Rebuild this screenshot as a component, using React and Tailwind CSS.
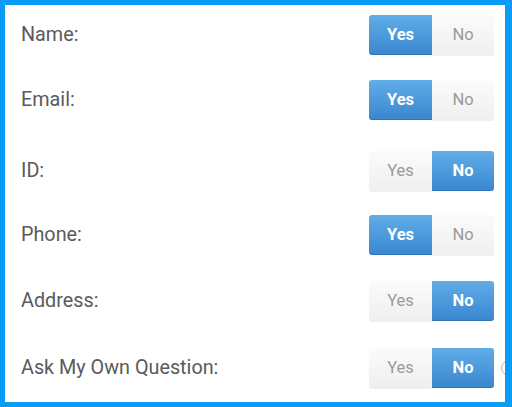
import React from "react";

const rows = [
  { label: "Name:", yes: true, mt: "mt-[10px]" },
  { label: "Email:", yes: true, mt: "mt-[25px]" },
  { label: "ID:", yes: false, mt: "mt-[31px]" },
  { label: "Phone:", yes: true, mt: "mt-[24px]" },
  { label: "Address:", yes: false, mt: "mt-[26px]" },
  { label: "Ask My Own Question:", yes: false, mt: "mt-[27px]", help: true },
];

const active =
  "bg-gradient-to-b from-[#60ade8] to-[#3a86cf] text-white font-bold shadow-[inset_0_-1px_0_rgba(0,0,0,0.12)]";
const inactive =
  "bg-gradient-to-b from-[#fbfbfb] to-[#efefef] text-[#9a9a9a] font-normal shadow-[0_1px_1px_rgba(0,0,0,0.07)]";

function Toggle({ yes, help }) {
  return (
    <div className="relative flex">
      <div
        className={`w-[63px] h-[40px] flex items-center justify-center rounded-l-[3px] text-[16.5px] ${
          yes ? active : inactive
        }`}
      >
        Yes
      </div>
      <div
        className={`w-[62px] h-[40px] flex items-center justify-center rounded-r-[3px] text-[16.5px] ${
          yes ? inactive : active
        }`}
      >
        No
      </div>
      {help && (
        <div className="absolute left-[132px] top-[12px] w-[16px] h-[16px] rounded-full border-[1.5px] border-[#b5b5b5]" />
      )}
    </div>
  );
}

export default function App() {
  return (
    <div
      className="w-[512px] h-[407px] bg-[#0a9bf6] pl-[5px] pt-[5px] pr-[7px] pb-[5px]"
      style={{ fontFamily: "Roboto, 'Liberation Sans', sans-serif" }}
    >
      <div className="w-full h-full bg-white overflow-hidden flex flex-col pl-[16px] pr-[11px]">
        {rows.map((r) => (
          <div key={r.label} className={`flex items-center justify-between ${r.mt}`}>
            <span className="text-[19.8px] text-[#5a5a5a] leading-none">{r.label}</span>
            <Toggle yes={r.yes} help={r.help} />
          </div>
        ))}
      </div>
    </div>
  );
}
